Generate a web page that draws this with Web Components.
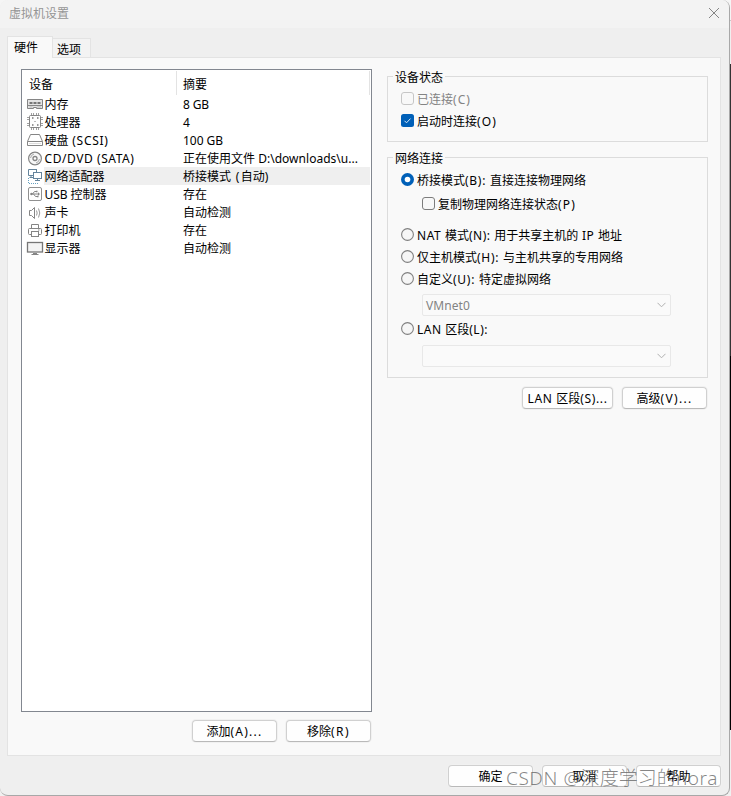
<!DOCTYPE html>
<html lang="zh-CN">
<head>
<meta charset="utf-8">
<title>虚拟机设置</title>
<style>
html,body{margin:0;width:731px;height:796px;overflow:hidden}
body{background:linear-gradient(#f5f5f5 0 20px,#c8c8c8 20px 21px,#f0f0f0 21px 64px,#333 64px 356px,#000 356px 730px,#f0f0f0 730px);font:12px "Noto Sans","Noto Sans CJK SC",sans-serif;color:#000}
</style>
</head>
<body>
<vm-dialog></vm-dialog>
<script>
// Text whose Latin runs are spaced so that the whole line has the width given by "w".
class UiText extends HTMLElement{
  connectedCallback(){
    const root=this.attachShadow({mode:'open'});
    const size=+(this.getAttribute('size')||12);
    root.innerHTML=`<style>:host{display:inline-block;white-space:pre;font-size:${size}px;line-height:20px;height:18px}
      .c{font-family:"Noto Sans CJK SC",sans-serif;line-height:1}</style>`;
    let n=0,lat=[];
    for(const run of this.textContent.match(/[\u4e00-\u9fff]+|[^\u4e00-\u9fff]+/g)||[]){
      const s=document.createElement('span');s.textContent=run;root.append(s);
      if(/[\u4e00-\u9fff]/.test(run))s.className='c';else{lat.push(s);n+=run.length}
    }
    const w=+this.getAttribute('w');
    if(w&&n){const d=(w-this.getBoundingClientRect().width)/n;lat.forEach(s=>s.style.letterSpacing=d+'px')}
  }
}
customElements.define('ui-text',UiText);

const define=(name,html)=>customElements.define(name,class extends HTMLElement{
  connectedCallback(){
    if(this.shadowRoot)return;
    const t=document.createElement('template');t.innerHTML=html;
    this.attachShadow({mode:'open'}).append(t.content.cloneNode(true));
  }
});

define('ui-button',`<style>:host{display:flex;justify-content:center;align-items:center;box-sizing:border-box;width:85px;height:22px;border:1px solid #d0d0d0;border-bottom-color:#b9b9b9;border-radius:4px;background:#fefefe;box-shadow:0 0 0 1px #f1f1f1}</style><slot></slot>`);
define('ui-group',`<style>:host{display:block;box-sizing:border-box;width:321px;border:1px solid #dcdcdc}
 .l{display:block;width:max-content;margin:-9px 0 0 5px;padding:0 2px;height:18px;background:#f9f9f9}.b{padding-left:13px}</style>
 <div class="l"><slot name="legend"></slot></div><div class="b"><slot></slot></div>`);
define('ui-combo',`<style>:host{display:flex;align-items:center;justify-content:space-between;box-sizing:border-box;width:249px;height:22px;border:1px solid #e8e8e8;border-radius:2px;background:#fafafa;color:#838383;padding:0 4px 0 3px}</style>
 <span><slot></slot></span><svg width="9" height="6" fill="none" stroke="#b0b0b0"><path d="M.5 .8 4.5 4.8 8.5 .8"/></svg>`);

class UiChoice extends HTMLElement{
  connectedCallback(){
    const radio=this.hasAttribute('radio'),on=this.hasAttribute('on'),off=this.hasAttribute('disabled');
    const shape=radio
      ?(on?'<circle cx="6.5" cy="6.5" r="6.5" fill="#0060b8"/><circle cx="6.5" cy="6.5" r="2.8" fill="#fff"/>':'<circle cx="6.5" cy="6.5" r="5.9" fill="#f6f6f6" stroke="#808080" stroke-width="1.1"/>')
      :(on?'<rect width="13" height="13" rx="2.5" fill="#0060b8"/><path d="M3.5 6.8l2 2 4-4.2" fill="none" stroke="#d9e9f8" stroke-width="1"/>':`<rect x=".5" y=".5" width="12" height="12" rx="2.5" fill="#f8f8f8" stroke="${off?'#c6c6c6':'#7c7c7c'}"/>`);
    this.attachShadow({mode:'open'}).innerHTML=`<style>:host{display:flex;align-items:center;gap:3px;height:18px;color:${off?'#838383':'#000'}}svg{display:block;flex:none;margin-bottom:1px}</style><svg width="13" height="13">${shape}</svg><slot></slot>`;
  }
}
customElements.define('ui-choice',UiChoice);

const G='#858585';
const ICONS={
 mem:`<path d="M1.5 4.5h15v9h-6v-1h-3v1h-6z" fill="#e4e4e4" stroke="${G}"/><path d="M3.5 7h3v2h-3zM7.5 7h3v2h-3zM11.5 7h3v2h-3z" fill="#777"/><path d="M2 10.5h14" stroke="${G}"/><path d="M3.5 12h3M11 12h4" stroke="#bbb"/>`,
 cpu:`<path d="M5.5 0v17M7.500 0v17M10.500 0v17M12.500 0v17M1 4.500h16M1 6.500h16M1 10.500h16M1 12.500h16" stroke="#a0a0a0"/><rect x="3.500" y="2.500" width="11" height="12" rx="1" fill="#fff" stroke="${G}"/><path d="M6 5h1.500M11 5h1.500M6 12h1.500M11 12h1.500" stroke="#777" stroke-width="1.500"/><path d="M8 8.500h2" stroke="#bbb"/>`,
 disk:`<path d="M4.500 3.500h9l3 7v4h-15v-4z" fill="#fff" stroke="${G}" stroke-linejoin="round"/><path d="M1.500 10.500h15" stroke="${G}"/><path d="M3 12.500h12" stroke="#ddd"/>`,
 cd:`<circle cx="9" cy="9.500" r="6.400" fill="#f7f7f7" stroke="${G}" stroke-width="1.200"/><circle cx="9" cy="9.500" r="2" fill="#fff" stroke="${G}" stroke-width="1.300"/><path d="M4.500 9A5 5 0 0 1 8 5M13.500 10A5 5 0 0 1 10 14" fill="none" stroke="#aaa"/>`,
 net:`<path d="M10 2.500H2.500v6H7" fill="#fff" stroke="#65849c"/><path d="M10.500 2v4M5 8.500v2M3.500 10.500h4" stroke="#65849c" fill="none"/><rect x="7.500" y="5.500" width="8" height="6" fill="#fff" stroke="#65849c"/><path d="M11.500 11.500v2M9 13.500h5" stroke="#65849c"/><path d="M2.500 11v5.500H12" fill="none" stroke="#65a0c0" stroke-dasharray="1 1"/>`,
 usb:`<rect x="2.500" y="2.500" width="13" height="13" rx="1.500" fill="#fff" stroke="#909090"/><path d="M4.500 9h8M6.500 9l2-2.500h2M7.500 9l2 2.500h2" fill="none" stroke="${G}"/><circle cx="5.500" cy="9" r="1.200" fill="${G}"/><path d="M12 7.200 14 9 12 10.800zM10 5.700h1.500v1.500H10zM11 10.800h1.500v1.500H11z" fill="${G}"/>`,
 sound:`<path d="M3.500 7.500h2l3-3v11l-3-3h-2z" fill="#fff" stroke="${G}"/><path d="M10.500 7.500q1.300 2.500 0 5M12.500 5.500q2.500 4.500 0 9" fill="none" stroke="#999"/>`,
 print:`<path d="M5.500 7V3.500h7V7" fill="#fff" stroke="${G}"/><rect x="2.500" y="7.500" width="13" height="6" rx="1" fill="#fff" stroke="${G}"/><rect x="5.500" y="10.500" width="7" height="5" fill="#fff" stroke="${G}"/><path d="M12 9h1.500" stroke="#888"/>`,
 mon:`<rect x="1.500" y="3.500" width="15" height="9.500" fill="#f4f4f4" stroke="#777" stroke-width="1.300"/><path d="M7 14.500h4M5.500 15.500h7" stroke="${G}"/>`
};
class DeviceRow extends HTMLElement{
  connectedCallback(){
    this.attachShadow({mode:'open'}).innerHTML=`<style>:host{display:grid;grid-template-columns:18px 138px 188px;height:18px;padding-left:4px}
    div{height:18px;padding-left:.5px;overflow:hidden}div+div{padding-left:1px}${this.hasAttribute('selected')?'div{background:#efefef}':''}svg{display:block}</style>
    <svg width="18" height="18">${ICONS[this.getAttribute('icon')]}</svg><div><slot name="name"></slot></div><div><slot></slot></div>`;
  }
}
customElements.define('device-row',DeviceRow);

const rows=[['mem','内存',24,'8 GB',26],['cpu','处理器',36,'4',7],['disk','硬盘 (SCSI)',64,'100 GB',40],['cd','CD/DVD (SATA)',90,'正在使用文件 D:\\downloads\\u...',175],['net','网络适配器',60,'桥接模式 (自动)',87],['usb','USB 控制器',62,'存在',24],['sound','声卡',24,'自动检测',48],['print','打印机',36,'存在',24],['mon','显示器',36,'自动检测',48]]
 .map(([i,a,aw,b,bw])=>`<device-row icon="${i}"${i==='net'?' selected':''}><ui-text slot="name" w="${aw}">${a}</ui-text><ui-text w="${bw}">${b}</ui-text></device-row>`).join('');

define('device-list',`<style>:host{display:block;box-sizing:border-box;width:351px;height:643px;border:1px solid #828790;background:#fff}
 .h{display:grid;grid-template-columns:154px 193px;height:25px;align-items:center}
 .h div{box-sizing:border-box;height:24px;margin-top:1px;padding:4px 0 0 7px;border-right:1px solid #e3e3e3}.h div+div{padding-left:7px;width:194px}</style>
 <div class="h"><div style="width:155px"><ui-text>设备</ui-text></div><div><ui-text>摘要</ui-text></div></div>${rows}`);

define('network-settings',`<style>:host{display:block;width:321px;padding-top:7px}
 ui-group{display:block}.g1{height:66px;margin-bottom:15px}.g2{height:221px}
 ui-choice,ui-combo{margin-top:4px}.in{margin-left:21px}
 .btns{display:flex;gap:9px;justify-content:flex-end;margin:9px 1px 0 0}</style>
 <ui-group class="g1"><ui-text slot="legend">设备状态</ui-text>
  <ui-choice disabled><ui-text w="54">已连接(C)</ui-text></ui-choice>
  <ui-choice on><ui-text w="80">启动时连接(O)</ui-text></ui-choice></ui-group>
 <ui-group class="g2"><ui-text slot="legend">网络连接</ui-text>
  <ui-choice radio on><ui-text w="169">桥接模式(B): 直接连接物理网络</ui-text></ui-choice>
  <ui-choice class="in" style="margin-top:6px"><ui-text w="138">复制物理网络连接状态(P)</ui-text></ui-choice>
  <ui-choice radio style="margin-top:13px"><ui-text w="205">NAT 模式(N): 用于共享主机的 IP 地址</ui-text></ui-choice>
  <ui-choice radio><ui-text w="206">仅主机模式(H): 与主机共享的专用网络</ui-text></ui-choice>
  <ui-choice radio><ui-text w="134">自定义(U): 特定虚拟网络</ui-text></ui-choice>
  <ui-combo class="in" style="margin-top:6px"><ui-text w="44">VMnet0</ui-text></ui-combo>
  <ui-choice radio><ui-text w="71">LAN 区段(L):</ui-text></ui-choice>
  <ui-combo class="in" style="margin-top:7px"></ui-combo></ui-group>
 <div class="btns"><ui-button style="width:91px"><ui-text w="80">LAN 区段(S)...</ui-text></ui-button><ui-button><ui-text w="56">高级(V)...</ui-text></ui-button></div>`);

define('vm-dialog',`<style>
 :host{display:block;position:relative;box-sizing:border-box;width:730px;height:796px;background:#efefef;border:solid #a8a8a8;border-width:0 1px 1px 0;border-radius:8px;overflow:hidden}
 header{display:flex;justify-content:space-between;align-items:flex-start;height:28px;box-sizing:border-box;padding:4px 10px 0 9px;background:#f3f3f3;color:#959595}
 header svg{margin-top:4px}
 .tabs{display:flex;align-items:flex-end;height:21px;margin:8px 0 0 7px;position:relative}
 .tab{box-sizing:border-box;border:1px solid #e3e3e3;border-bottom:0;height:19px;width:39px;padding:1px 0 0 4px;background:#f3f3f3;margin-left:-1px}
 .tab.on{height:22px;width:46px;margin:0 0 -1px;padding:1px 0 0 6px;background:#f9f9f9;z-index:1}
 main{display:grid;grid-template-columns:351px 321px;column-gap:15px;align-content:start;box-sizing:border-box;width:714px;height:699px;margin-left:7px;border:1px solid #e3e3e3;background:#f9f9f9;padding:11px 0 0 13px}
 .btns{display:flex;gap:9px;justify-content:flex-end}
 .left{padding-top:8px;padding-right:1px}
 footer{padding:9px 8px 0 0}
 .mark{position:absolute;left:506px;top:767px;font-weight:300;color:rgba(95,95,95,.75)}
</style>
<header><ui-text>虚拟机设置</ui-text><svg width="10" height="10" stroke="#858585" fill="none"><path d="M0 0 10 10M10 0 0 10"/></svg></header>
<div class="tabs"><div class="tab on"><ui-text>硬件</ui-text></div><div class="tab"><ui-text>选项</ui-text></div></div>
<main><device-list></device-list><network-settings></network-settings>
<div class="btns left"><ui-button><ui-text w="56">添加(A)...</ui-text></ui-button><ui-button><ui-text w="43">移除(R)</ui-text></ui-button></div></main>
<footer class="btns"><ui-button><ui-text>确定</ui-text></ui-button><ui-button><ui-text>取消</ui-text></ui-button><ui-button><ui-text>帮助</ui-text></ui-button></footer>
<ui-text class="mark" size="19" w="212">CSDN @深度学习的nora</ui-text>`);
</script>
</body>
</html>
